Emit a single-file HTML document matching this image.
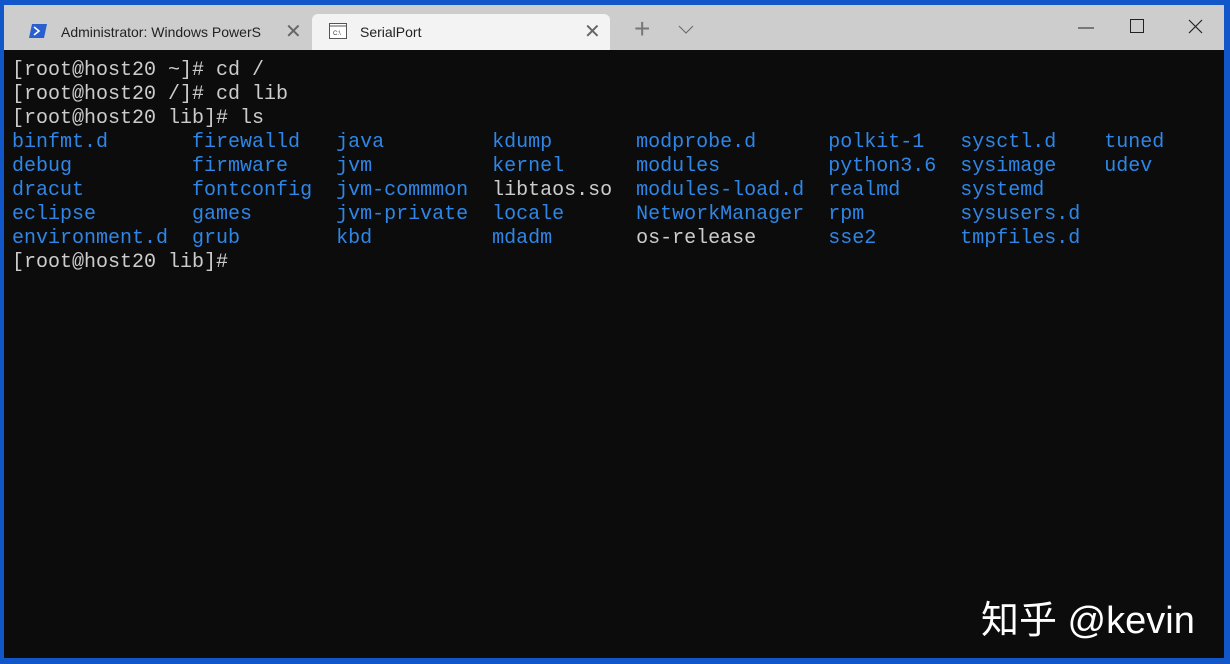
<!DOCTYPE html>
<html><head><meta charset="utf-8"><style>
body{margin:0;width:1230px;height:664px;background:#1257c9;overflow:hidden;position:relative;font-family:"Liberation Sans",sans-serif}
.bar{position:absolute;left:4px;top:5px;width:1220px;height:45px;background:#cdcdcd}
.tab{position:absolute;top:9px;height:36px;font-size:14px;color:#222;line-height:36px}
.t1{left:20px;width:286px}
.t2{left:308px;width:298px;background:#f3f3f3;border-radius:6px 6px 0 0}
.term{position:absolute;left:4px;top:50px;width:1220px;height:608px;background:#0c0c0c}
pre{margin:0;position:absolute;left:8px;top:9px;font:20px/24px "Liberation Mono",monospace;color:#cccccc}
.b{color:#2f86e6}
.wm{position:absolute;left:981px;top:589px;color:#fff;font:38px "Liberation Sans","Noto Sans CJK SC",sans-serif}
</style></head><body>
<div class="bar">
 <div class="tab t1"><svg style="position:absolute;left:5px;top:9px" width="18" height="16"><path d="M3 1h15l-3 14H0z" fill="#2a5fcf"/><path d="M5 4l5 4-5 4" stroke="#fff" stroke-width="1.6" fill="none"/></svg><span style="position:absolute;left:37px">Administrator: Windows PowerS</span><span style="position:absolute;left:261px;font-size:20px;color:#666">✕</span></div>
 <div class="tab t2"><svg style="position:absolute;left:17px;top:9px" width="18" height="16"><rect x=".5" y=".5" width="17" height="15" fill="#fff" stroke="#555"/><line x1="1" y1="3" x2="17" y2="3" stroke="#555"/><text x="4" y="12" font-size="6" fill="#333">C:\</text></svg><span style="position:absolute;left:48px">SerialPort</span><span style="position:absolute;left:272px;font-size:20px;color:#666">✕</span></div>
 <span style="position:absolute;left:630px;top:8px;font-size:28px;color:#777;font-weight:100">+</span>
 <svg style="position:absolute;left:674px;top:20px" width="16" height="10"><path d="M1 1l7 7 7-7" stroke="#666" fill="none"/></svg>
 <svg style="position:absolute;left:1074px;top:22px" width="16" height="2"><line x1="0" y1="1" x2="16" y2="1" stroke="#222"/></svg>
 <svg style="position:absolute;left:1126px;top:14px" width="14" height="14"><rect x=".5" y=".5" width="13" height="13" fill="none" stroke="#222"/></svg>
 <svg style="position:absolute;left:1184px;top:14px" width="15" height="15"><path d="M1 1l13 13M14 1L1 14" stroke="#222" stroke-width="1.2"/></svg>
</div>
<div class="term"><pre>[root@host20 ~]# cd /
[root@host20 /]# cd lib
[root@host20 lib]# ls
<span class="b">binfmt.d</span>       <span class="b">firewalld</span>   <span class="b">java</span>         <span class="b">kdump</span>       <span class="b">modprobe.d</span>      <span class="b">polkit-1</span>   <span class="b">sysctl.d</span>    <span class="b">tuned</span>
<span class="b">debug</span>          <span class="b">firmware</span>    <span class="b">jvm</span>          <span class="b">kernel</span>      <span class="b">modules</span>         <span class="b">python3.6</span>  <span class="b">sysimage</span>    <span class="b">udev</span>
<span class="b">dracut</span>         <span class="b">fontconfig</span>  <span class="b">jvm-commmon</span>  libtaos.so  <span class="b">modules-load.d</span>  <span class="b">realmd</span>     <span class="b">systemd</span>
<span class="b">eclipse</span>        <span class="b">games</span>       <span class="b">jvm-private</span>  <span class="b">locale</span>      <span class="b">NetworkManager</span>  <span class="b">rpm</span>        <span class="b">sysusers.d</span>
<span class="b">environment.d</span>  <span class="b">grub</span>        <span class="b">kbd</span>          <span class="b">mdadm</span>       os-release      <span class="b">sse2</span>       <span class="b">tmpfiles.d</span>
[root@host20 lib]#</pre></div>
<div class="wm">知乎 @kevin</div>
</body></html>
